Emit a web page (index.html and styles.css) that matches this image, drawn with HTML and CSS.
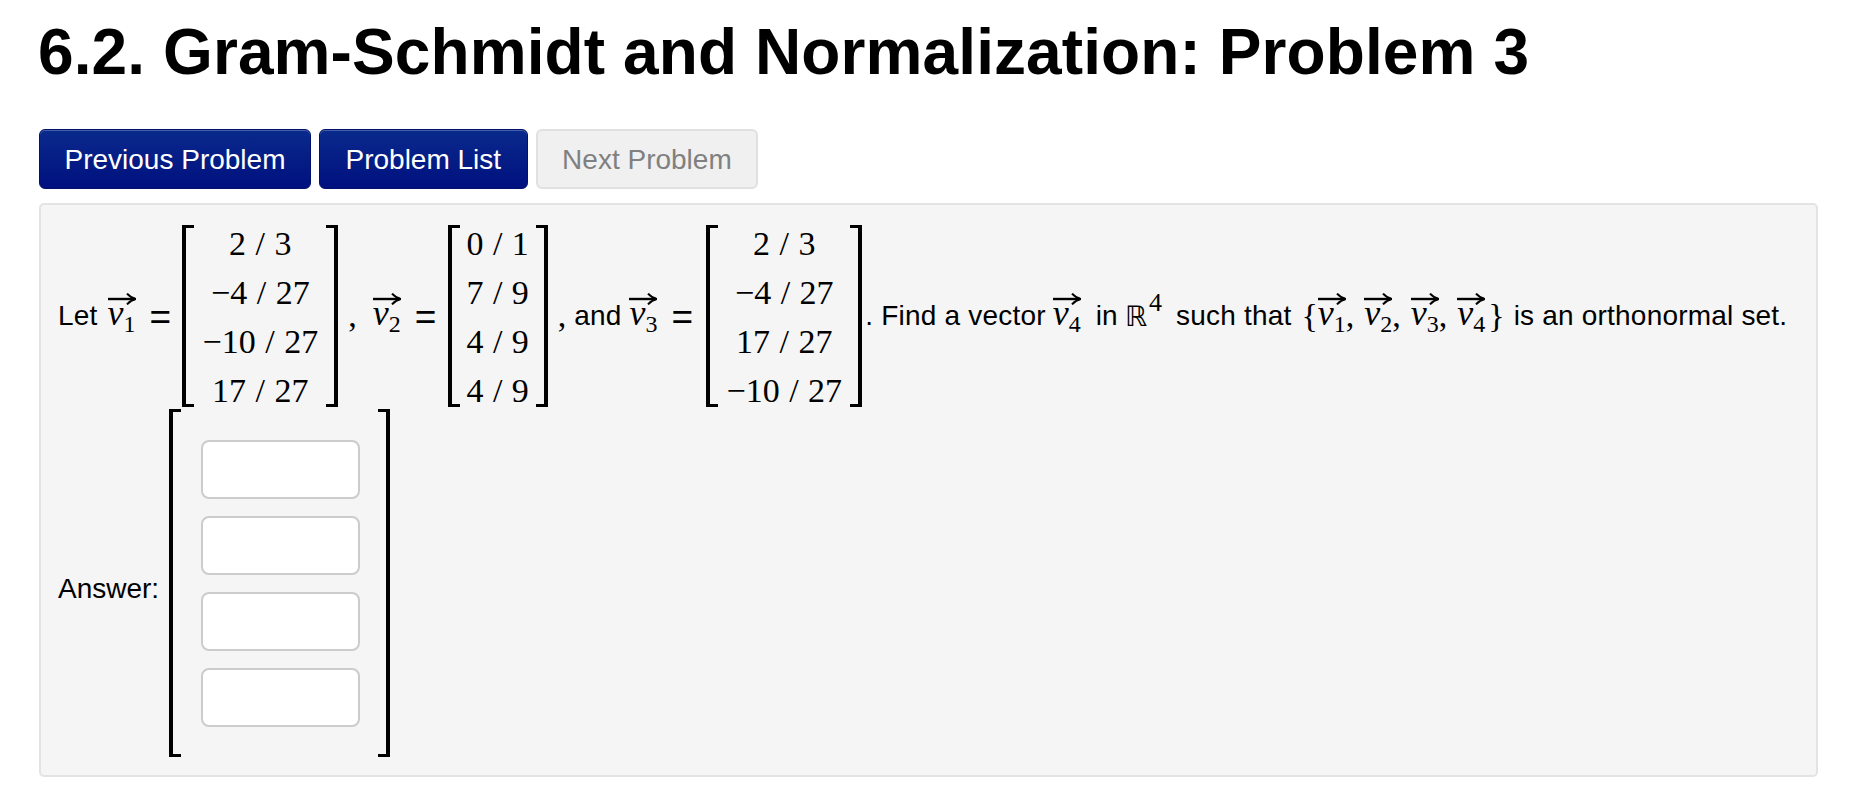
FILE: index.html
```html
<!DOCTYPE html>
<html lang="en">
<head>
    <meta charset="UTF-8">
    <title>6.2. Gram-Schmidt and Normalization: Problem 3</title>
    <link rel="stylesheet" href="styles.css">
</head>
<body>
    <svg class="defs">
        <symbol id="arrow" viewBox="0 0 28 12">
            <path d="M0 6H27" fill="none" stroke="#000" stroke-width="2.4"/>
            <path d="M19 .6Q23 5 28 6Q23 7 19 11.4" fill="none" stroke="#000" stroke-width="2"/>
        </symbol>
    </svg>

    <h1>6.2. Gram-Schmidt and Normalization: Problem 3</h1>

    <div class="nav">
        <a class="btn">Previous Problem</a>
        <a class="btn btn-list">Problem List</a>
        <a class="btn btn-disabled">Next Problem</a>
    </div>

    <div class="problem">
        <!-- Statement -->
        <div class="statement">
            <span>Let</span>
            <span class="vec"><svg class="arrow"><use href="#arrow"/></svg><i>v</i><sub>1</sub></span>
            <span class="eq">=</span>
            <div class="matrix">
                <span class="bracket left"></span>
                <div class="cells">
                    <span>2 / 3</span>
                    <span>−4 / 27</span>
                    <span>−10 / 27</span>
                    <span>17 / 27</span>
                </div>
                <span class="bracket right"></span>
            </div>
            <span class="math comma-wide">,</span>
            <span class="vec vec-after-comma"><svg class="arrow"><use href="#arrow"/></svg><i>v</i><sub>2</sub></span>
            <span class="eq">=</span>
            <div class="matrix">
                <span class="bracket left"></span>
                <div class="cells cells-narrow">
                    <span>0 / 1</span>
                    <span>7 / 9</span>
                    <span>4 / 9</span>
                    <span>4 / 9</span>
                </div>
                <span class="bracket right"></span>
            </div>
            <span class="math comma-and">,</span>
            <span class="word-and">and</span>
            <span class="vec vec-after-and"><svg class="arrow"><use href="#arrow"/></svg><i>v</i><sub>3</sub></span>
            <span class="eq eq-last">=</span>
            <div class="matrix">
                <span class="bracket left"></span>
                <div class="cells">
                    <span>2 / 3</span>
                    <span>−4 / 27</span>
                    <span>17 / 27</span>
                    <span>−10 / 27</span>
                </div>
                <span class="bracket right"></span>
            </div>
            <span class="period">. Find a vector</span>
            <span class="vec vec-after-text"><svg class="arrow"><use href="#arrow"/></svg><i>v</i><sub>4</sub></span>
            <span class="word-in">in</span>
            <span class="reals">ℝ<sup>4</sup></span>
            <span class="word-such">such that</span>
            <span class="math brace-open">{</span>
            <span class="vec vec-first"><svg class="arrow"><use href="#arrow"/></svg><i>v</i><sub>1</sub></span><span class="math">,</span>
            <span class="vec"><svg class="arrow"><use href="#arrow"/></svg><i>v</i><sub>2</sub></span><span class="math">,</span>
            <span class="vec"><svg class="arrow"><use href="#arrow"/></svg><i>v</i><sub>3</sub></span><span class="math">,</span>
            <span class="vec"><svg class="arrow"><use href="#arrow"/></svg><i>v</i><sub>4</sub></span>
            <span class="math brace-close">}</span>
            <span class="word-is">is an orthonormal set.</span>
        </div>

        <!-- Answer -->
        <div class="answer">
            <label class="answer-label">Answer:</label>
            <div class="matrix matrix-answer">
                <span class="bracket left"></span>
                <div class="inputs">
                    <input type="text">
                    <input type="text">
                    <input type="text">
                    <input type="text">
                </div>
                <span class="bracket right"></span>
            </div>
        </div>
    </div>
</body>
</html>
```

FILE: styles.css
```css
* { box-sizing: border-box; }
body { margin: 0; padding: 0 42px 0 39px; background: white; color: black; font-family: "Liberation Sans", Arial, sans-serif; font-size: 28px; overflow: hidden; }
.defs { display: none; }

h1 { margin: 0 0 0 -1px; padding-top: 15px; height: 129px; font-size: 64px; line-height: 74px; font-weight: bold; letter-spacing: 0.1px; }

/* Buttons */
.nav { display: flex; gap: 8px; height: 74px; }
.btn { height: 60px; padding: 0 24.5px; line-height: 60px; border: 1px solid #00126b; border-radius: 6px; color: white; background: linear-gradient(#0a2a8c, #00107f); box-shadow: inset 0 1px 0 rgba(255,255,255,0.25); }
.btn-list { padding: 0 25.5px; }
.btn-disabled { color: #808080; background: #f0f0f0; border: 2px solid #e0e0e0; line-height: 58px; box-shadow: none; }

/* Problem panel */
.problem { height: 574px; padding: 20px 17px 17px; background: #f5f5f5; border: 2px solid #e3e3e3; border-radius: 5px; }
.statement { display: flex; align-items: center; height: 182px; white-space: nowrap; letter-spacing: 0.2px; }
.math, .cells { font-family: "Liberation Serif", "Times New Roman", serif; font-size: 34px; letter-spacing: 0; }
.eq { margin: 0 11px 0 14px; font-size: 37px; line-height: 1; }
.eq-last { margin-right: 13px; }

/* Vectors */
.vec { position: relative; flex: none; width: 28px; margin: 0 0 6px 10px; font-family: "Liberation Serif", "Times New Roman", serif; font-size: 36px; line-height: 40px; letter-spacing: 0; }
.vec sub { font-size: 24px; line-height: 0; vertical-align: -7px; }
.arrow { position: absolute; left: 0; top: 0; width: 28px; height: 12px; }

/* Matrices */
.matrix { display: flex; align-items: center; height: 182px; }
.bracket { align-self: stretch; width: 12px; border: solid black; border-width: 3px 0; }
.bracket.left { border-left-width: 4px; }
.bracket.right { border-right-width: 4px; }
.cells { display: flex; flex-direction: column; align-items: center; width: 132px; margin-top: 1px; line-height: 49px; word-spacing: 1px; }
.cells-narrow { width: 76px; }

/* Spacing between pieces of the statement */
.comma-wide { margin-left: 10px; }
.vec-after-comma { margin-left: 16px; }
.comma-and { margin-left: 10px; }
.word-and { margin-left: 8px; }
.vec-after-and { margin-left: 8px; }
.period { margin-left: 3px; }
.vec-after-text { margin-left: 7px; }
.word-in { margin-left: 15px; }
.reals { margin-left: 7px; font-family: "DejaVu Sans", sans-serif; letter-spacing: 0; }
.reals sup { margin-left: 2px; font-family: "Liberation Serif", serif; font-size: 26px; line-height: 0; vertical-align: 15px; }
.word-such { margin-left: 14px; }
.brace-open { margin-left: 10px; }
.vec-first { margin-left: 0; }
.brace-close { margin-left: 3px; }
.word-is { margin-left: 9px; }

/* Answer */
.answer { display: flex; align-items: center; margin-top: 2px; letter-spacing: 0; }
.answer-label { margin-top: 12px; margin-right: 10px; }
.matrix-answer { height: 348px; }
.inputs { display: flex; flex-direction: column; gap: 17px; margin: 0 18px 0 20px; }
input { display: block; width: 159px; height: 59px; border: 2px solid #ccc; border-radius: 8px; background: white; }
```
